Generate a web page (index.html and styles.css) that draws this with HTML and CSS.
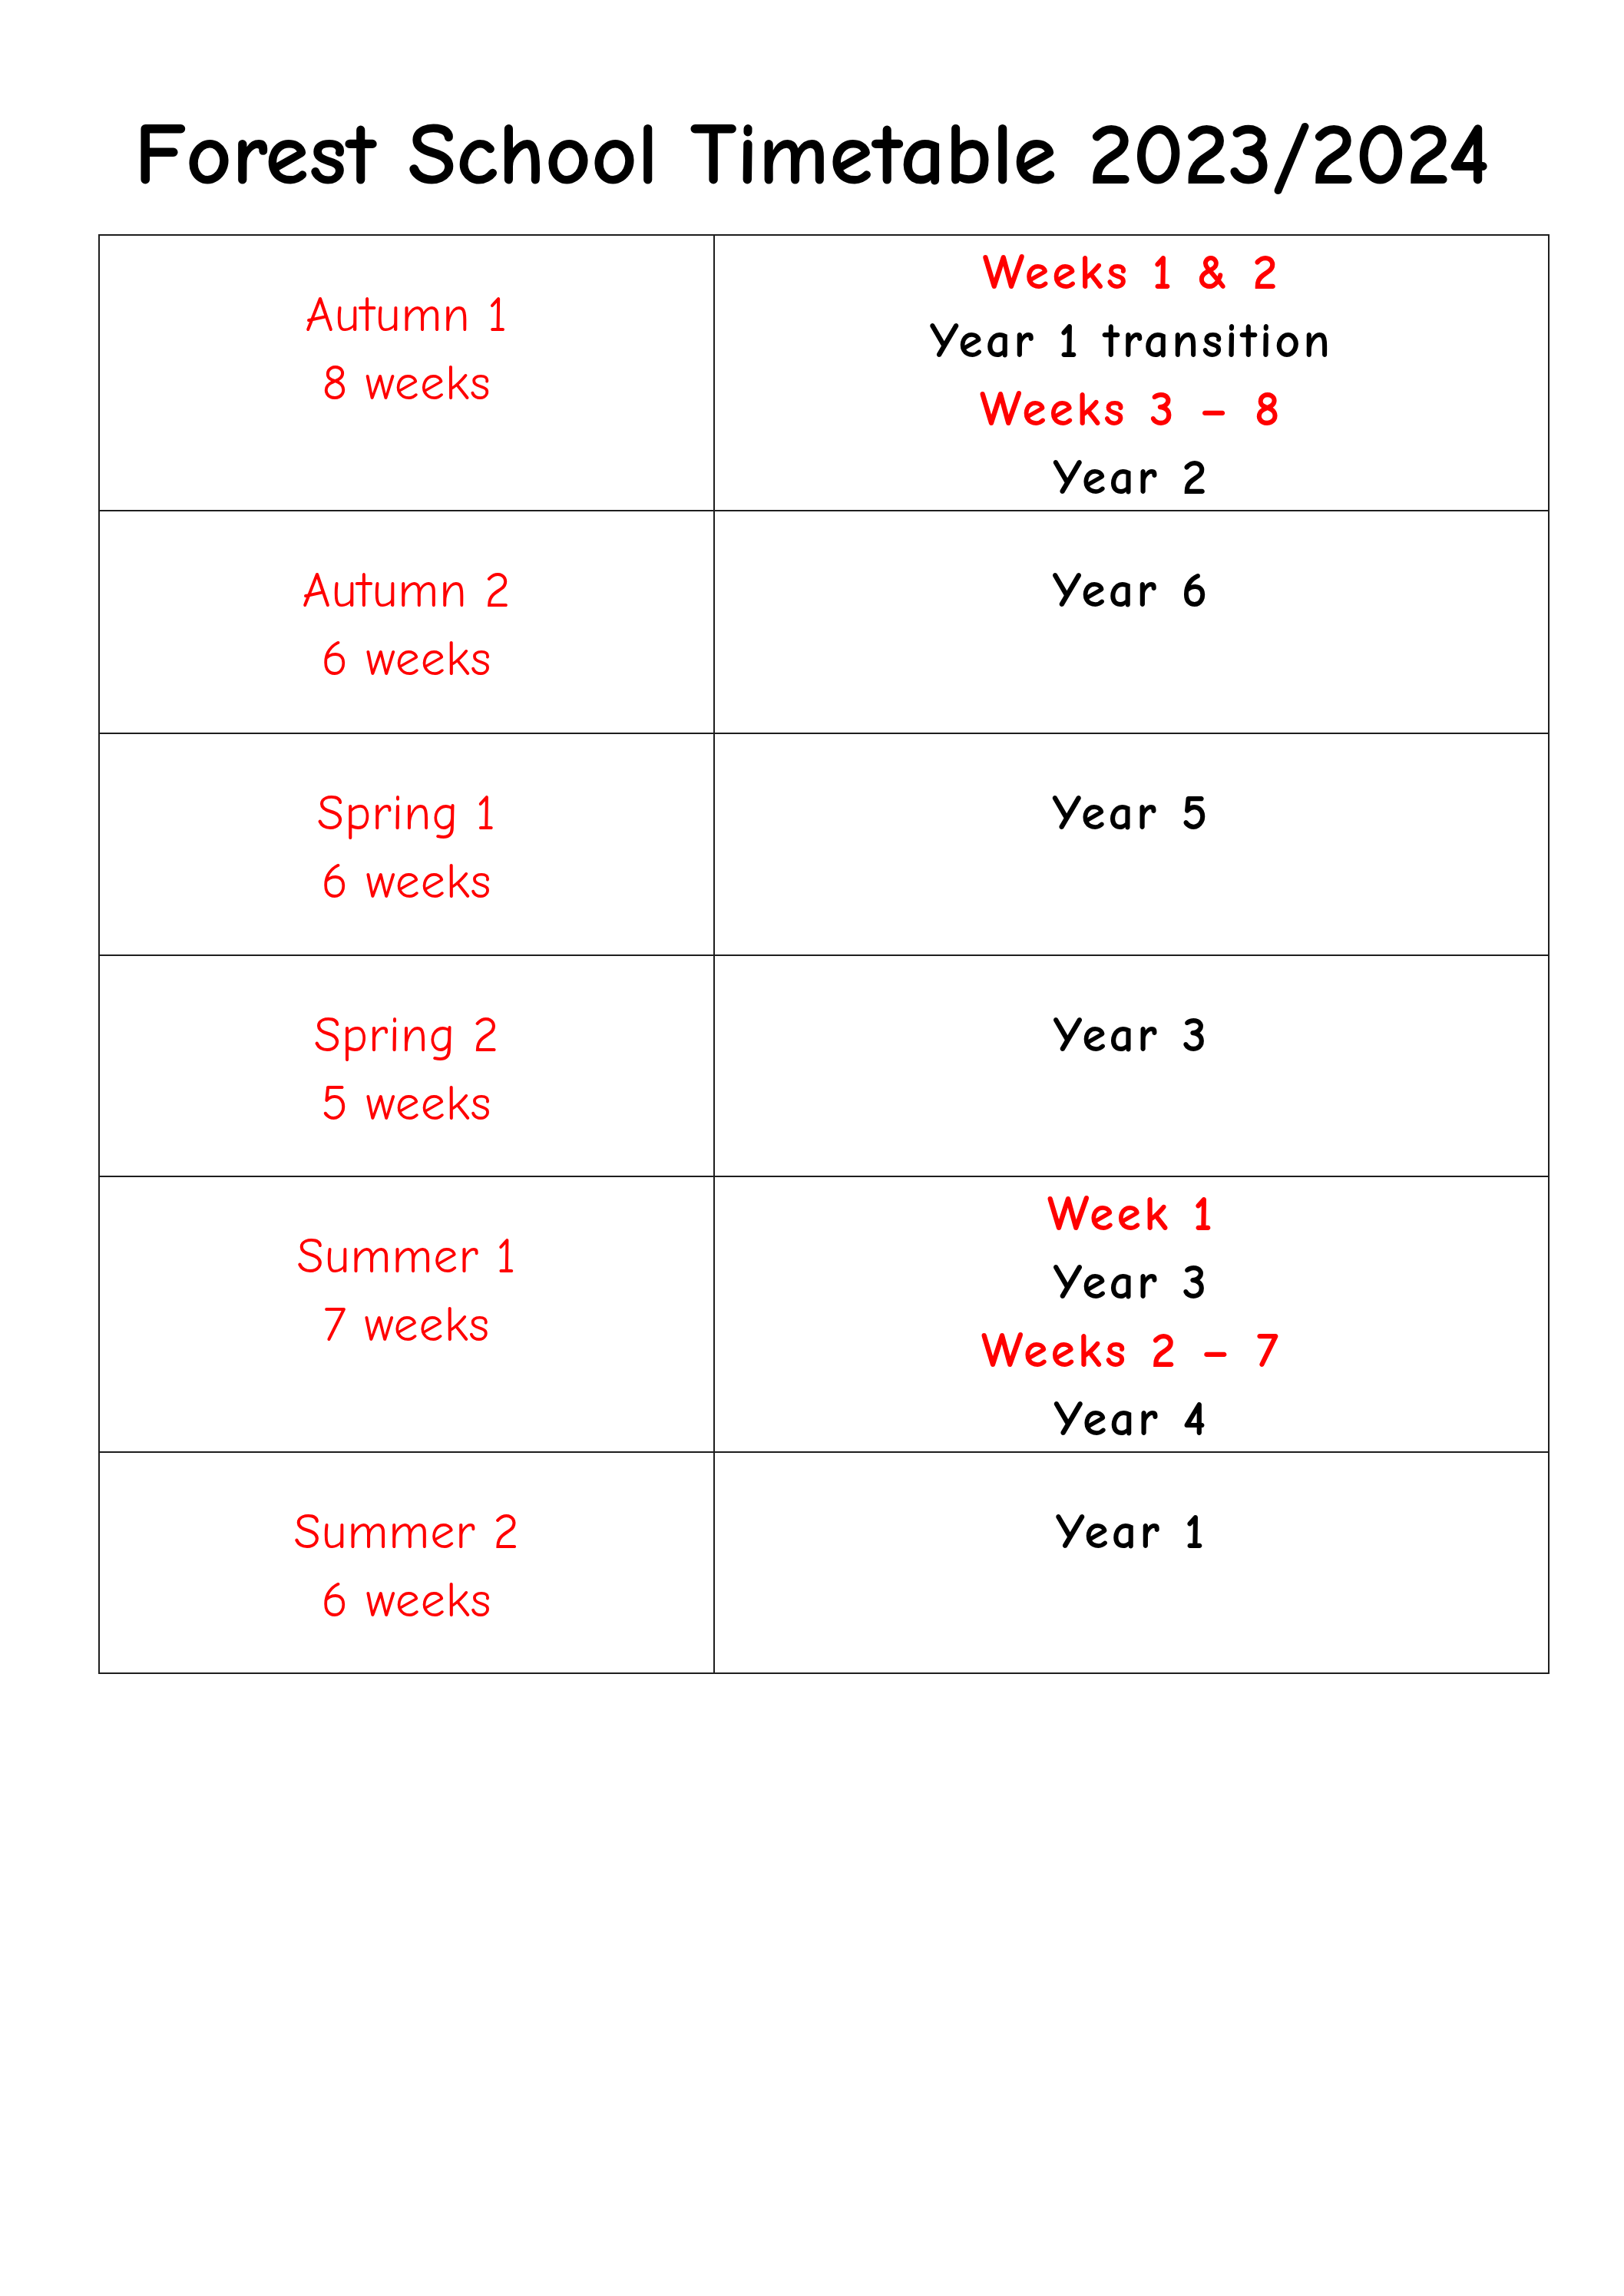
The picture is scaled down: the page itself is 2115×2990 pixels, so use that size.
FILE: index.html
```html
<!DOCTYPE html>
<html lang="en">
<head>
<meta charset="utf-8">
<title>Forest School Timetable 2023/2024</title>
<link rel="stylesheet" href="styles.css">
</head>
<body>
<div class="page">
  <h1 class="title">Forest School Timetable 2023/2024</h1>
  <div class="timetable">
    <div class="cell term"><div>Autumn 1</div><div>8 weeks</div></div>
    <div class="cell groups multi">
      <div class="hl">Weeks 1 &amp; 2</div>
      <div>Year 1 transition</div>
      <div class="hl">Weeks 3 – 8</div>
      <div>Year 2</div>
    </div>

    <div class="cell term"><div>Autumn 2</div><div>6 weeks</div></div>
    <div class="cell groups"><div>Year 6</div></div>

    <div class="cell term"><div>Spring 1</div><div>6 weeks</div></div>
    <div class="cell groups"><div>Year 5</div></div>

    <div class="cell term"><div>Spring 2</div><div>5 weeks</div></div>
    <div class="cell groups"><div>Year 3</div></div>

    <div class="cell term"><div>Summer 1</div><div>7 weeks</div></div>
    <div class="cell groups multi">
      <div class="hl">Week 1</div>
      <div>Year 3</div>
      <div class="hl">Weeks 2 – 7</div>
      <div>Year 4</div>
    </div>

    <div class="cell term"><div>Summer 2</div><div>6 weeks</div></div>
    <div class="cell groups"><div>Year 1</div></div>
  </div>
</div>
</body>
</html>
```

FILE: styles.css
```css
html, body {
  margin: 0;
  padding: 0;
  background: #ffffff;
}

.page {
  width: 2115px;
  min-height: 2990px;
  padding-top: 137px;
  box-sizing: border-box;
  font-family: "Comic Sans MS", "Comic Neue", "Liberation Sans", Arial, sans-serif;
  color: #000000;
}

.title {
  margin: 0 0 38px 0;
  text-align: center;
  font-size: 116px;
  line-height: 130px;
  font-weight: 700;
  letter-spacing: 0;
  word-spacing: 0;
  color: #000000;
}

.timetable {
  display: grid;
  grid-template-columns: 801px 1087px;
  grid-template-rows: 359px 290px 289px 288px 359px 288px;
  margin-left: 128px;
  width: 1890px;
  border-top: 2px solid #1e1e1e;
  border-left: 2px solid #1e1e1e;
  box-sizing: border-box;
}

.cell {
  border-right: 2px solid #1e1e1e;
  border-bottom: 2px solid #1e1e1e;
  text-align: center;
  font-size: 64px;
  line-height: 89px;
  padding-top: 59px;
  box-sizing: border-box;
}

.term {
  color: #ff0000;
  font-weight: 400;
  letter-spacing: 1px;
}

.groups {
  color: #000000;
  font-weight: 700;
  letter-spacing: 4px;
  word-spacing: 2px;
}

.groups.multi {
  padding-top: 4px;
}

.hl {
  color: #ff0000;
}
```
